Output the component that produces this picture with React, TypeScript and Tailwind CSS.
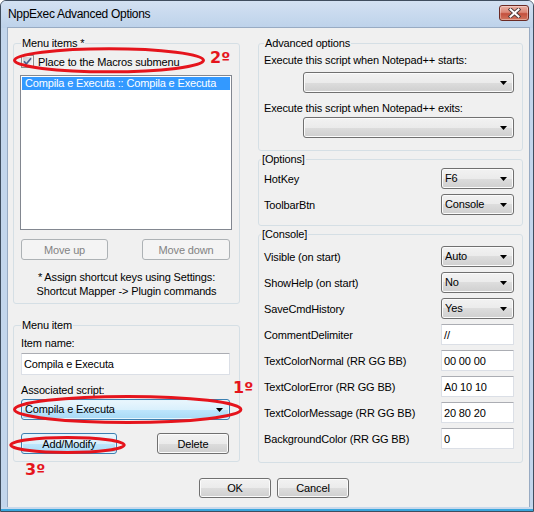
import React from "react";

const BTN_N =
  "border border-[#707070] rounded-[3px] bg-[linear-gradient(to_bottom,#f2f2f2_0%,#ebebeb_50%,#dddddd_50%,#cfcfcf_100%)] shadow-[inset_0_0_0_1px_#fbfbfb]";
const BTN_HOT =
  "border border-[#3c7fb1] rounded-[3px] bg-[linear-gradient(to_bottom,#eaf6fd_0%,#d9f0fc_50%,#bee6fd_50%,#a7d9f5_100%)] shadow-[inset_0_0_0_1px_#e4f5fd]";
const BTN_DIS = "border border-[#adb2b5] rounded-[3px] bg-[#f4f4f4] text-[#838383]";

function Checkbox() {
  return (
    <svg width="13" height="13" viewBox="0 0 13 13" className="shrink-0">
      <defs>
        <linearGradient id="cbg" x1="0" y1="0" x2="1" y2="1">
          <stop offset="0" stopColor="#c8ccd2" />
          <stop offset="1" stopColor="#f4f5f6" />
        </linearGradient>
      </defs>
      <rect x="0.5" y="0.5" width="12" height="12" fill="#f5f5f5" stroke="#8e8f8f" />
      <rect x="2" y="2" width="9" height="9" fill="url(#cbg)" />
      <path d="M3 6.3 L5.3 9 L10 3.2" fill="none" stroke="#4a5f8f" strokeWidth="1.7" />
    </svg>
  );
}

function Arrow() {
  return (
    <svg width="7" height="4" viewBox="0 0 7 4" className="shrink-0">
      <path d="M0 0H7L3.5 4Z" fill="#000" />
    </svg>
  );
}

function Combo({ value, w, hot, cls = "" }: { value?: string; w: string; hot?: boolean; cls?: string }) {
  return (
    <div className={`${w} ${cls} h-[21px] shrink-0 flex items-center pl-[3px] pr-[6px] ${hot ? BTN_HOT : BTN_N}`}>
      <span className="flex-1 whitespace-nowrap overflow-hidden leading-[13px]">{value}</span>
      <Arrow />
    </div>
  );
}

function Edit({ value, w, h, cls = "" }: { value?: string; w: string; h: string; cls?: string }) {
  return (
    <div
      className={`${w} ${h} ${cls} shrink-0 bg-white border border-[#dbdfe6] border-t-[#abadb3] rounded-[1px] flex items-center pl-[2px] whitespace-nowrap`}
    >
      {value}
    </div>
  );
}

function Btn({ children, kind, cls }: { children: React.ReactNode; kind: string; cls: string }) {
  return <div className={`${cls} ${kind} shrink-0 flex items-center justify-center whitespace-nowrap`}>{children}</div>;
}

function Row({ label, children }: { label: string; children: React.ReactNode }) {
  return (
    <div className="flex items-center h-[21px] pl-[5px] pr-[8px]">
      <span className="flex-1 whitespace-nowrap">{label}</span>
      {children}
    </div>
  );
}

export default function App() {
  return (
    <div className="relative w-[534px] h-[512px] bg-white font-['Liberation_Sans',Arial,sans-serif] text-[11px] leading-[14px] tracking-[-0.15px] text-black">
      <div className="w-[534px] h-[512px] flex flex-col rounded-t-[6px] border border-[#3f4d5e] bg-[#c3d6ec] overflow-hidden">
        {/* title bar */}
        <div className="h-[27px] shrink-0 flex items-start bg-[linear-gradient(to_bottom,#d3e1f2,#bdd2ea)]">
          <span className="ml-[7px] mt-[6px] text-[12px] leading-[14px] tracking-[-0.3px] text-black whitespace-nowrap">
            NppExec Advanced Options
          </span>
          <div className="ml-auto mr-[4px] mt-[4px] w-[30px] h-[16px] rounded-[3px] border border-[#6b2a24] bg-[linear-gradient(to_bottom,#eab0a4_0%,#dc8878_45%,#c4503d_55%,#d2765f_100%)] shadow-[inset_0_0_0_1px_rgba(255,255,255,0.35)] flex items-center justify-center">
            <svg width="13" height="10" viewBox="0 0 13 10">
              <path d="M2.5 1.5 L10.5 8.5 M10.5 1.5 L2.5 8.5" stroke="#4a3a3a" strokeWidth="3.8" strokeLinecap="square" />
              <path d="M2.5 1.5 L10.5 8.5 M10.5 1.5 L2.5 8.5" stroke="#ffffff" strokeWidth="2" strokeLinecap="square" />
            </svg>
          </div>
        </div>

        {/* client */}
        <div className="ml-[7px] mr-[4px] h-[479px] shrink-0 bg-[#f0f0f0] shadow-[0_0_0_1px_#98abc3] pl-[5px] pt-[8px] flex flex-col">
          <div className="flex gap-[18px]">
            {/* left column */}
            <div className="w-[227px] flex flex-col gap-[14px]">
              <fieldset className="h-[268px] border border-[#d5dfe5] rounded-[3px] min-w-0">
                <legend className="ml-[7px] px-[1px] leading-[14px]">Menu items *</legend>
                <div className="px-[6px] flex flex-col">
                  <div className="mt-[5px] ml-[1px] flex items-center h-[13px]">
                    <Checkbox />
                    <span className="ml-[4px] whitespace-nowrap">Place to the Macros submenu</span>
                  </div>
                  <div className="mt-[7px] w-[212px] h-[155px] bg-white border border-[#828790] p-[1px]">
                    <div className="h-[13px] bg-[#3399ff] text-white leading-[13px] pl-[3px] whitespace-nowrap">
                      Compila e Executa :: Compila e Executa
                    </div>
                  </div>
                  <div className="mt-[9px] flex">
                    <Btn kind={BTN_DIS} cls="ml-[1px] w-[87px] h-[21px]">Move up</Btn>
                    <Btn kind={BTN_DIS} cls="ml-[34px] w-[88px] h-[21px]">Move down</Btn>
                  </div>
                  <div className="mt-[10px] text-center leading-[14px]">
                    * Assign shortcut keys using Settings:
                    <br />
                    Shortcut Mapper -&gt; Plugin commands
                  </div>
                </div>
              </fieldset>

              <fieldset className="h-[144px] border border-[#d5dfe5] rounded-[3px] min-w-0">
                <legend className="ml-[7px] px-[1px] leading-[14px]">Menu item</legend>
                <div className="px-[7px] flex flex-col">
                  <div className="mt-[4px] leading-[14px]">Item name:</div>
                  <Edit value="Compila e Executa" w="w-[209px]" h="h-[22px]" cls="mt-[3px]" />
                  <div className="mt-[8px] leading-[14px]">Associated script:</div>
                  <Combo value="Compila e Executa" w="w-[209px]" hot cls="mt-[2px]" />
                  <div className="mt-[13px] flex">
                    <Btn kind={BTN_HOT} cls="w-[96px] h-[21px]">Add/Modify</Btn>
                    <Btn kind={BTN_N} cls="ml-[40px] w-[72px] h-[21px]">Delete</Btn>
                  </div>
                </div>
              </fieldset>
            </div>

            {/* right column */}
            <div className="w-[265px] flex flex-col gap-[1px]">
              <fieldset className="h-[115px] border border-[#d5dfe5] rounded-[3px] min-w-0">
                <legend className="ml-[5px] px-[1px] leading-[14px]">Advanced options</legend>
                <div className="flex flex-col pl-[5px] pr-[8px]">
                  <div className="mt-[3px] leading-[14px] whitespace-nowrap">Execute this script when Notepad++ starts:</div>
                  <Combo w="w-[211px]" cls="mt-[5px] self-end" />
                  <div className="mt-[8px] leading-[14px] whitespace-nowrap">Execute this script when Notepad++ exits:</div>
                  <Combo w="w-[211px]" cls="mt-[2px] self-end" />
                </div>
              </fieldset>

              <fieldset className="h-[74px] border border-[#d5dfe5] rounded-[3px] min-w-0">
                <legend className="ml-[2px] px-[1px] leading-[14px]">[Options]</legend>
                <div className="mt-[2px] flex flex-col gap-[5px]">
                  <Row label="HotKey">
                    <Combo value="F6" w="w-[73px]" />
                  </Row>
                  <Row label="ToolbarBtn">
                    <Combo value="Console" w="w-[73px]" />
                  </Row>
                </div>
              </fieldset>

              <fieldset className="h-[236px] border border-[#d5dfe5] rounded-[3px] min-w-0">
                <legend className="ml-[2px] px-[1px] leading-[14px]">[Console]</legend>
                <div className="mt-[5px] flex flex-col gap-[5px]">
                  <Row label="Visible (on start)">
                    <Combo value="Auto" w="w-[73px]" />
                  </Row>
                  <Row label="ShowHelp (on start)">
                    <Combo value="No" w="w-[73px]" />
                  </Row>
                  <Row label="SaveCmdHistory">
                    <Combo value="Yes" w="w-[73px]" />
                  </Row>
                  <Row label="CommentDelimiter">
                    <Edit value="//" w="w-[73px]" h="h-[21px]" />
                  </Row>
                  <Row label="TextColorNormal (RR GG BB)">
                    <Edit value="00 00 00" w="w-[73px]" h="h-[21px]" />
                  </Row>
                  <Row label="TextColorError (RR GG BB)">
                    <Edit value="A0 10 10" w="w-[73px]" h="h-[21px]" />
                  </Row>
                  <Row label="TextColorMessage (RR GG BB)">
                    <Edit value="20 80 20" w="w-[73px]" h="h-[21px]" />
                  </Row>
                  <Row label="BackgroundColor (RR GG BB)">
                    <Edit value="0" w="w-[73px]" h="h-[21px]" />
                  </Row>
                </div>
              </fieldset>
            </div>
          </div>

          <div className="mt-[15px] ml-[186px] flex gap-[6px]">
            <Btn kind={BTN_N} cls="w-[72px] h-[20px]">OK</Btn>
            <Btn kind={BTN_N} cls="w-[72px] h-[20px]">Cancel</Btn>
          </div>
        </div>

        {/* bottom frame */}
        <div className="flex-1 bg-[linear-gradient(to_bottom,#c9d9ec_0,#c9d9ec_50%,#3aa6dc_50%,#3aa6dc_100%)]" />
      </div>

      {/* red annotations */}
      <svg className="absolute left-0 top-0 pointer-events-none" width="534" height="512">
        <ellipse cx="109" cy="60.3" rx="94.5" ry="11.5" fill="none" stroke="#e5141c" strokeWidth="3" />
        <ellipse cx="127.7" cy="409.5" rx="113.2" ry="13" fill="none" stroke="#e5141c" strokeWidth="3" />
        <ellipse cx="67.5" cy="445" rx="56.7" ry="7.5" fill="none" stroke="#e5141c" strokeWidth="3" />
      </svg>
      <span className="absolute left-[210px] top-[50px] font-['DejaVu_Sans',sans-serif] font-bold text-[16px] leading-[16px] tracking-normal text-[#e5141c]">
        2º
      </span>
      <span className="absolute left-[233px] top-[380px] font-['DejaVu_Sans',sans-serif] font-bold text-[16px] leading-[16px] tracking-normal text-[#e5141c]">
        1º
      </span>
      <span className="absolute left-[25px] top-[462px] font-['DejaVu_Sans',sans-serif] font-bold text-[16px] leading-[16px] tracking-normal text-[#e5141c]">
        3º
      </span>
    </div>
  );
}
